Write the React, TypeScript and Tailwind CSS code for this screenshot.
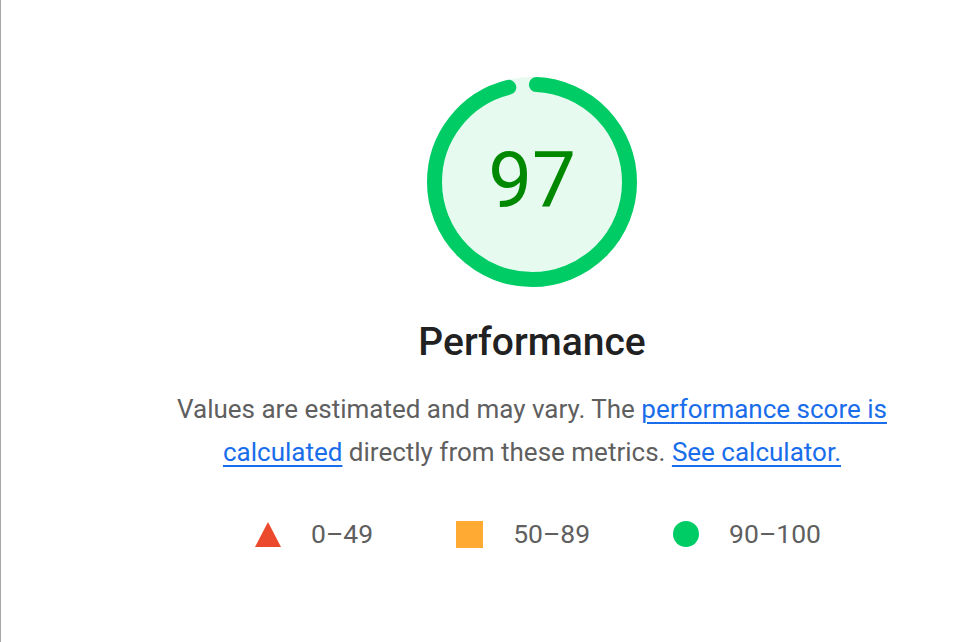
import React from 'react';

const R = 97.5;
const C = 2 * Math.PI * R;

function Gauge({ score }: { score: number }) {
  const gap = 29;
  const arc = C - gap;
  return (
    <div className="relative w-[210px] h-[210px]">
      <svg width="210" height="210" viewBox="0 0 210 210" className="block">
        <circle cx="105" cy="105" r="105" fill="#e6faf0" />
        <circle
          cx="105"
          cy="105"
          r={R}
          fill="none"
          stroke="#00cc66"
          strokeWidth="15"
          strokeLinecap="round"
          strokeDasharray={`${arc} ${C}`}
          strokeDashoffset={-4.5}
          transform="rotate(-90 105 105)"
        />
      </svg>
      <div className="absolute inset-0 flex items-center justify-center text-[78px] leading-none text-[#008800] font-['Roboto',sans-serif] pb-[2px]">
        {score}
      </div>
    </div>
  );
}

export default function App() {
  return (
    <div className="w-[976px] h-[642px] bg-white border-l border-[#a6a6a6] overflow-hidden font-['Roboto',sans-serif]">
      <div className="flex flex-col items-center pl-[87px] pt-[77px]">
        <Gauge score={97} />

        <h1 className="mt-[32px] text-[39px] leading-[46px] font-medium text-[#212121]">
          Performance
        </h1>

        <p className="mt-[23px] w-[740px] text-center text-[26px] leading-[43px] text-[#5f5f5f]">
          Values are estimated and may vary. The{' '}
          <a
            href="#"
            className="text-[#1a6dea] underline underline-offset-[4px] decoration-[1.5px]"
          >
            performance score is calculated
          </a>{' '}
          directly from these metrics.{' '}
          <a
            href="#"
            className="text-[#1a6dea] underline underline-offset-[4px] decoration-[1.5px]"
          >
            See calculator.
          </a>
        </p>

        <div className="mt-[46px] flex items-center gap-[83px] pl-[12px] text-[26.5px] leading-[28px] text-[#5f5f5f]">
          <div className="flex items-center gap-[30px]">
            <svg width="26" height="25" viewBox="0 0 26 25">
              <polygon points="13,0 26,25 0,25" fill="#eb4a2d" />
            </svg>
            <span>0–49</span>
          </div>
          <div className="flex items-center gap-[30px]">
            <span className="block w-[27px] h-[27px] bg-[#ffaa33]" />
            <span>50–89</span>
          </div>
          <div className="flex items-center gap-[30px]">
            <span className="block w-[26px] h-[26px] rounded-full bg-[#00cc66]" />
            <span>90–100</span>
          </div>
        </div>
      </div>
    </div>
  );
}
